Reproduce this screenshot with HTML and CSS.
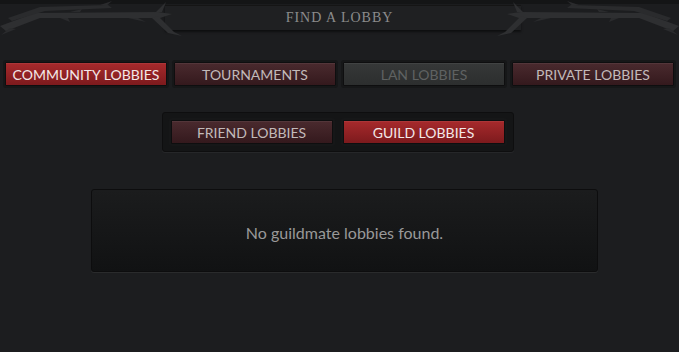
FILE: index.html
```html
<!DOCTYPE html>
<html lang="en">
<head>
    <meta charset="UTF-8">
    <title>Find a Lobby</title>
    <link rel="stylesheet" href="styles.css">
</head>
<body>

    <header class="top">
        <svg class="branch left" viewBox="0 0 185 40" width="185" height="40">
            <path d="M0 26 L35 13 L158 12 L172 14 L160 18 L40 18 L6 31 Z" fill="#2e2f31"/>
            <path d="M8 18 L40 7 L108 5 L112 8 L45 11 L12 21 Z" fill="#2a2b2d"/>
            <path d="M156 12 L166 2 L162 12 Z M158 16 L174 32 L182 36 L168 33 L152 18 Z" fill="#2e2f31"/>
            <path d="M100 5 L112 1 L106 6 Z M60 18 L70 22 L68 18 Z M128 18 L146 22 L138 18 Z M10 28 L1 35 L16 29 Z M70 12 L82 9 L80 12 Z" fill="#2a2b2d"/>
        </svg>
        <div class="plate">
            <h1>Find a Lobby</h1>
        </div>
        <svg class="branch right" viewBox="0 0 185 40" width="185" height="40">
            <g transform="translate(185 0) scale(-1 1)">
                <path d="M0 26 L35 13 L158 12 L172 14 L160 18 L40 18 L6 31 Z" fill="#2e2f31"/>
                <path d="M8 18 L40 7 L108 5 L112 8 L45 11 L12 21 Z" fill="#2a2b2d"/>
                <path d="M156 12 L166 2 L162 12 Z M158 16 L174 32 L182 36 L168 33 L152 18 Z" fill="#2e2f31"/>
                <path d="M100 5 L112 1 L106 6 Z M60 18 L70 22 L68 18 Z M128 18 L146 22 L138 18 Z M10 28 L1 35 L16 29 Z M70 12 L82 9 L80 12 Z" fill="#2a2b2d"/>
            </g>
        </svg>
    </header>

    <nav class="tabs">
        <button class="tab active">Community Lobbies</button>
        <button class="tab">Tournaments</button>
        <button class="tab disabled">LAN Lobbies</button>
        <button class="tab">Private Lobbies</button>
    </nav>

    <div class="subtabs-wrap">
        <div class="subtabs">
            <button class="tab">Friend Lobbies</button>
            <button class="tab active">Guild Lobbies</button>
        </div>
    </div>

    <div class="results">
        <p>No guildmate lobbies found.</p>
    </div>

</body>
</html>
```

FILE: styles.css
```css
body {
    margin: 0;
    height: 352px;
    overflow: hidden;
    font-family: Lato, "Open Sans", sans-serif;
    background: #1c1d1f;
    color: #ccc;
}

.top {
    position: relative;
    height: 36px;
    display: flex;
    justify-content: center;
    background: linear-gradient(#141516 0, #141516 4px, #1c1d1f 4px);
}

.branch {
    position: absolute;
    top: 0;
}

.branch.left { left: 0; }
.branch.right { right: 0; }

.plate {
    width: 356px;
    height: 24px;
    margin-top: 5px;
    margin-left: 6px;
    background: #1f2022;
    border-top: 1px solid #151515;
    box-shadow: 0 2px 2px rgba(0,0,0,0.5);
    display: flex;
    align-items: center;
    justify-content: center;
}

h1 {
    margin: 0 6px 0 0;
    font-family: "Liberation Serif", serif;
    font-weight: normal;
    font-size: 14px;
    letter-spacing: 1px;
    text-transform: uppercase;
    color: #8c8c8c;
}

.tabs {
    margin-top: 26px;
    padding: 0 5px;
    display: grid;
    grid-template-columns: repeat(4, 1fr);
    gap: 7px;
}

.tab {
    height: 24px;
    padding: 0;
    font-family: Lato, "Open Sans", sans-serif;
    font-size: 14px;
    text-transform: uppercase;
    color: #c2baba;
    background: linear-gradient(#4a2a2e, #34191d);
    border: 1px solid #0e0e0f;
    box-shadow: 0 0 0 2px #161718, inset 0 1px 0 rgba(255,255,255,0.06);
    border-radius: 1px;
}

.tab.active {
    color: #f3e8e8;
    background: linear-gradient(#a72a2c, #7d1a1d);
}

.tab.disabled {
    color: #5f6262;
    background: linear-gradient(#363838, #2c2e2e);
}

.subtabs-wrap {
    margin-top: 26px;
    display: flex;
    justify-content: center;
    padding-right: 4px;
}

.subtabs {
    display: grid;
    grid-template-columns: 162px 162px;
    gap: 10px;
    padding: 7px 8px;
    background: #141516;
    border: 1px solid #0e0e0f;
    border-radius: 3px;
    box-shadow: 0 1px 0 #262729;
}

.results {
    width: 505px;
    height: 81px;
    margin: 37px 0 0 91px;
    background: linear-gradient(#1b1c1d, #111213);
    border: 1px solid #0d0d0e;
    border-radius: 3px;
    box-shadow: 0 1px 0 #2a2b2c;
    display: flex;
    align-items: center;
    justify-content: center;
}

.results p {
    margin: 4px 0 0;
    font-size: 16px;
    color: #999;
}
```
